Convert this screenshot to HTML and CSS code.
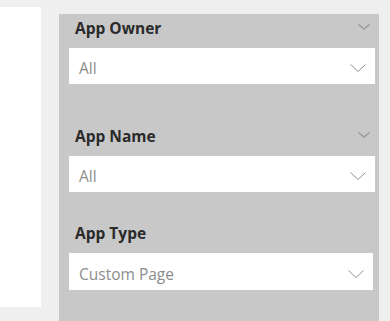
FILE: index.html
```html
<!DOCTYPE html>
<html>
<head>
<meta charset="utf-8">
<link rel="stylesheet" href="styles.css">
</head>
<body>
<div class="page">
  <div class="side-card"></div>
  <div class="slicer-pane">
    <section class="slicer s1">
      <div class="slicer-head">
        <span class="slicer-title">App Owner</span>
        <svg class="head-chev" viewBox="0 0 12 6" width="12" height="6"><path d="M0.5 0.5 L6 5 L11.5 0.5" fill="none" stroke="#9a9a9a" stroke-width="1.4"/></svg>
      </div>
      <div class="dropdown">
        <span class="dd-value">All</span>
        <svg class="dd-chev" viewBox="0 0 16 8" width="16" height="8"><path d="M0.5 0.5 L8 7.5 L15.5 0.5" fill="none" stroke="#909090" stroke-width="1"/></svg>
      </div>
    </section>
    <section class="slicer s2">
      <div class="slicer-head">
        <span class="slicer-title">App Name</span>
        <svg class="head-chev" viewBox="0 0 12 6" width="12" height="6"><path d="M0.5 0.5 L6 5 L11.5 0.5" fill="none" stroke="#9a9a9a" stroke-width="1.4"/></svg>
      </div>
      <div class="dropdown">
        <span class="dd-value">All</span>
        <svg class="dd-chev" viewBox="0 0 16 8" width="16" height="8"><path d="M0.5 0.5 L8 7.5 L15.5 0.5" fill="none" stroke="#909090" stroke-width="1"/></svg>
      </div>
    </section>
    <section class="slicer s3">
      <div class="slicer-head">
        <span class="slicer-title">App Type</span>
      </div>
      <div class="dropdown narrow">
        <span class="dd-value">Custom Page</span>
        <svg class="dd-chev" viewBox="0 0 16 8" width="16" height="8"><path d="M0.5 0.5 L8 7.5 L15.5 0.5" fill="none" stroke="#909090" stroke-width="1"/></svg>
      </div>
    </section>
  </div>
</div>
</body>
</html>
```
FILE: styles.css
```css
html, body {
  margin: 0;
  padding: 0;
  background: #efefef;
  width: 390px;
  height: 321px;
  overflow: hidden;
  font-family: "Open Sans", "Noto Sans", sans-serif;
}
.page {
  display: flex;
  align-items: flex-start;
  gap: 18px;
}
.side-card {
  width: 41px;
  height: 300px;
  margin-top: 7px;
  background: #ffffff;
}
.slicer-pane {
  width: 320px;
  height: 320px;
  margin-top: 14px;
  background: #c8c8c8;
  padding: 0 4px 0 10px;
  box-sizing: border-box;
}
.slicer-head {
  display: flex;
  justify-content: space-between;
  align-items: flex-start;
  height: 34px;
  padding: 3px 5px 0 6px;
  box-sizing: border-box;
}
.slicer-title {
  font-size: 15.5px;
  font-weight: 700;
  color: #2a2a2a;
  line-height: 22px;
}
.head-chev {
  margin-top: 7px;
}
.dropdown {
  display: flex;
  justify-content: space-between;
  align-items: center;
  height: 36px;
  background: #ffffff;
  padding: 4px 9px 0 10px;
  box-sizing: border-box;
}
.dropdown.narrow {
  margin-right: 2px;
  height: 37px;
}
.dd-value {
  font-size: 15.5px;
  color: #8c8c8c;
  line-height: 20px;
}
.s2 {
  margin-top: 38px;
}
.s3 {
  margin-top: 27px;
}
```
